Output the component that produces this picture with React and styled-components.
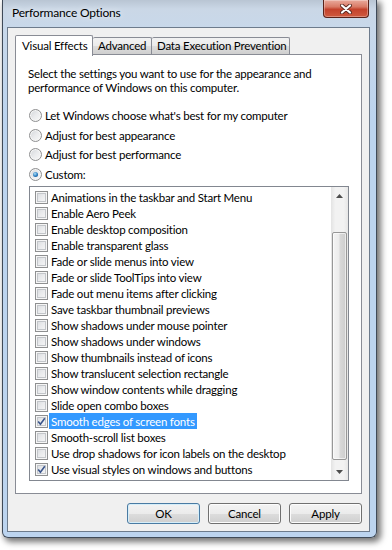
import styled, { createGlobalStyle } from "styled-components";

const GlobalStyle = createGlobalStyle`
  html, body {
    margin: 0;
    padding: 0;
    background: #ffffff;
  }
  body {
    font-family: Lato, "Liberation Sans", sans-serif;
    font-size: 11.5px;
    letter-spacing: -0.2px;
    color: #000;
  }
`;

const OPTIONS = [
  "Let Windows choose what's best for my computer",
  "Adjust for best appearance",
  "Adjust for best performance",
  "Custom:",
];

const EFFECTS = [
  ["Animations in the taskbar and Start Menu", false],
  ["Enable Aero Peek", false],
  ["Enable desktop composition", false],
  ["Enable transparent glass", false],
  ["Fade or slide menus into view", false],
  ["Fade or slide ToolTips into view", false],
  ["Fade out menu items after clicking", false],
  ["Save taskbar thumbnail previews", false],
  ["Show shadows under mouse pointer", false],
  ["Show shadows under windows", false],
  ["Show thumbnails instead of icons", false],
  ["Show translucent selection rectangle", false],
  ["Show window contents while dragging", false],
  ["Slide open combo boxes", false],
  ["Smooth edges of screen fonts", true],
  ["Smooth-scroll list boxes", false],
  ["Use drop shadows for icon labels on the desktop", false],
  ["Use visual styles on windows and buttons", true],
];

const SELECTED = 14;

const Page = styled.div`
  width: 392px;
  height: 550px;
  overflow: hidden;
  background: #fff;
  padding-left: 2px;
  box-sizing: border-box;
`;

const Window = styled.div`
  width: 375px;
  height: 538px;
  box-sizing: border-box;
  border: 1px solid #3f4a58;
  border-top: none;
  border-radius: 0 0 6px 6px;
  background: linear-gradient(
    180deg,
    #b9c5d3 0px,
    #cad7e6 9px,
    #c8d8ea 27px,
    #bcd4ef 120px,
    #bcd4ef 100%
  );
  box-shadow: 3px 3px 6px 1px rgba(0, 0, 0, 0.55);
  padding: 0 6px 5px 4px;
  display: flex;
  flex-direction: column;
`;

const TitleBar = styled.div`
  height: 27px;
  display: flex;
  align-items: flex-start;
  justify-content: space-between;
`;

const Title = styled.div`
  padding: 5px 0 0 5px;
  font-size: 12px;
  color: #000;
  text-shadow: 0 0 6px rgba(255, 255, 255, 0.9);
`;

const CloseButton = styled.div`
  width: 46px;
  height: 18px;
  margin-right: 1px;
  box-sizing: border-box;
  border: 1px solid #5a2219;
  border-top: none;
  border-radius: 0 0 4px 4px;
  background: linear-gradient(
    180deg,
    #e9aa9c 0%,
    #d97a66 40%,
    #c4422c 55%,
    #cf5a3f 100%
  );
  box-shadow: inset 0 0 0 1px rgba(255, 255, 255, 0.3);
  display: flex;
  align-items: center;
  justify-content: center;
`;

const Client = styled.div`
  flex: 1;
  border: 1px solid #6d7b8c;
  background: #f0f0f0;
  padding: 7px 7px 7px 7px;
  display: flex;
  flex-direction: column;
`;

const TabRow = styled.div`
  height: 19px;
  display: flex;
  align-items: flex-end;
`;

const Tab = styled.div`
  position: relative;
  z-index: ${(p) => (p.$active ? 1 : 0)};
  width: ${(p) => p.$w}px;
  height: ${(p) => (p.$active ? 21 : 17)}px;
  margin-bottom: ${(p) => (p.$active ? -2 : 0)}px;
  box-sizing: border-box;
  border: 1px solid #898c95;
  border-bottom: none;
  border-left-width: ${(p) => (p.$first ? 1 : 0)}px;
  ${(p) => p.$active && "border-left-width: 1px; border-right-width: 1px;"}
  border-radius: 2px 2px 0 0;
  background: ${(p) =>
    p.$active
      ? "#ffffff"
      : "linear-gradient(180deg, #f2f2f2 0%, #ebebeb 50%, #dddddd 51%, #cfcfcf 100%)"};
  padding: ${(p) => (p.$active ? "3px 0 0 6px" : "1px 0 0 5px")};
  white-space: nowrap;
`;

const Panel = styled.div`
  height: 440px;
  box-sizing: border-box;
  border: 1px solid #898c95;
  background: #ffffff;
  padding: 12px 12px 12px 12px;
  display: flex;
  flex-direction: column;
`;

const Intro = styled.p`
  margin: 0;
  line-height: 14px;
  white-space: nowrap;
`;

const RadioList = styled.div`
  margin-top: 11px;
  display: flex;
  flex-direction: column;
`;

const RadioRow = styled.label`
  height: 19.5px;
  display: flex;
  align-items: center;
  gap: 3px;
  padding-left: 1px;
  white-space: nowrap;
`;

const RadioMark = styled.span`
  width: 13px;
  height: 13px;
  flex: none;
  box-sizing: border-box;
  border-radius: 50%;
  border: 1px solid #8f9091;
  background: linear-gradient(135deg, #d2d5d9 0%, #eaebed 50%, #f9f9f9 100%);
  box-shadow: inset 0 0 0 1px #f6f6f6;
  display: flex;
  align-items: center;
  justify-content: center;

  &::after {
    content: "";
    display: ${(p) => (p.$on ? "block" : "none")};
    width: 5px;
    height: 5px;
    border-radius: 50%;
    background: radial-gradient(
      circle at 40% 35%,
      #aee0f8 0%,
      #2a7cc0 55%,
      #0c447c 100%
    );
  }
`;

const ListBox = styled.div`
  margin: 2px 0 0 1px;
  width: 320px;
  height: 295px;
  box-sizing: border-box;
  border: 1px solid #828790;
  background: #ffffff;
  display: flex;
`;

const Items = styled.div`
  flex: 1;
  padding-top: 2px;
  display: flex;
  flex-direction: column;
`;

const Row = styled.div`
  height: 16px;
  display: flex;
  align-items: stretch;
  padding-left: 5px;
  white-space: nowrap;
`;

const CheckMark = styled.span`
  width: 13px;
  height: 13px;
  flex: none;
  align-self: center;
  margin-right: 1px;
  box-sizing: border-box;
  border: 1px solid #8f9091;
  background: linear-gradient(135deg, #d6d9dc 0%, #eaebed 50%, #f9f9f9 100%);
  box-shadow: inset 0 0 0 1px #f6f6f6, inset 0 0 0 2px #c3c6ca;
  display: flex;
  align-items: center;
  justify-content: center;
`;

const Label = styled.span`
  display: flex;
  align-items: center;
  padding: 0 2px;
  background: ${(p) => (p.$selected ? "#3399ff" : "transparent")};
  color: ${(p) => (p.$selected ? "#ffffff" : "#000000")};
`;

const ScrollBar = styled.div`
  width: 17px;
  flex: none;
  display: flex;
  flex-direction: column;
  background: linear-gradient(
    90deg,
    #e3e3e3 0%,
    #f2f2f2 25%,
    #f2f2f2 75%,
    #e6e6e6 100%
  );
`;

const ScrollArrow = styled.div`
  height: 17px;
  flex: none;
  display: flex;
  align-items: center;
  justify-content: center;
`;

const Track = styled.div`
  flex: 1;
  padding: 28px 1px 0 1px;
`;

const Thumb = styled.div`
  height: 228px;
  box-sizing: border-box;
  border: 1px solid #979797;
  border-radius: 2px;
  background: linear-gradient(
    90deg,
    #f4f4f4 0%,
    #ececec 45%,
    #d8d8d8 55%,
    #cdcdcd 100%
  );
  box-shadow: inset 0 0 0 1px rgba(255, 255, 255, 0.6);
`;

const ButtonRow = styled.div`
  margin-top: 9px;
  display: flex;
  justify-content: flex-end;
  gap: 8px;
`;

const Button = styled.button`
  width: 73px;
  height: 21px;
  box-sizing: border-box;
  border: 1px solid ${(p) => (p.$default ? "#4a7ba3" : "#707070")};
  border-radius: 3px;
  background: linear-gradient(
    180deg,
    #f3f3f3 0%,
    #ebebeb 50%,
    #dddddd 51%,
    #cfcfcf 100%
  );
  box-shadow: inset 0 0 0 1px ${(p) => (p.$default ? "#d6eef9" : "#fcfcfc")};
  font-family: inherit;
  font-size: inherit;
  letter-spacing: inherit;
  color: #000;
  padding: 0;
`;

function Arrow({ up }) {
  return (
    <svg width="7" height="4" viewBox="0 0 7 4">
      <path d={up ? "M0 4 L3.5 0 L7 4 Z" : "M0 0 L3.5 4 L7 0 Z"} fill="#4d4d4d" />
    </svg>
  );
}

export default function App() {
  return (
    <Page>
      <GlobalStyle />
      <Window>
        <TitleBar>
          <Title>Performance Options</Title>
          <CloseButton>
            <svg width="12" height="10" viewBox="0 0 12 10">
              <path
                d="M2 1.5 L10 8.5 M10 1.5 L2 8.5"
                stroke="#5b2a22"
                strokeWidth="4"
                strokeLinecap="round"
              />
              <path
                d="M2 1.5 L10 8.5 M10 1.5 L2 8.5"
                stroke="#ffffff"
                strokeWidth="2.2"
                strokeLinecap="round"
              />
            </svg>
          </CloseButton>
        </TitleBar>
        <Client>
          <TabRow>
            <Tab $active $first $w={78}>Visual Effects</Tab>
            <Tab $w={59}>Advanced</Tab>
            <Tab $w={138}>Data Execution Prevention</Tab>
          </TabRow>
          <Panel>
            <Intro>
              Select the settings you want to use for the appearance and
              <br />
              performance of Windows on this computer.
            </Intro>
            <RadioList>
              {OPTIONS.map((text, i) => (
                <RadioRow key={text}>
                  <RadioMark $on={i === OPTIONS.length - 1} />
                  {text}
                </RadioRow>
              ))}
            </RadioList>
            <ListBox>
              <Items>
                {EFFECTS.map(([text, checked], i) => (
                  <Row key={text}>
                    <CheckMark>
                      {checked && (
                        <svg width="9" height="9" viewBox="0 0 9 9">
                          <path
                            d="M1.2 4.6 L3.4 7.2 L7.8 1.2"
                            fill="none"
                            stroke="#3a548a"
                            strokeWidth="1.6"
                          />
                        </svg>
                      )}
                    </CheckMark>
                    <Label $selected={i === SELECTED}>{text}</Label>
                  </Row>
                ))}
              </Items>
              <ScrollBar>
                <ScrollArrow>
                  <Arrow up />
                </ScrollArrow>
                <Track>
                  <Thumb />
                </Track>
                <ScrollArrow>
                  <Arrow />
                </ScrollArrow>
              </ScrollBar>
            </ListBox>
          </Panel>
          <ButtonRow>
            <Button $default>OK</Button>
            <Button>Cancel</Button>
            <Button>Apply</Button>
          </ButtonRow>
        </Client>
      </Window>
    </Page>
  );
}
